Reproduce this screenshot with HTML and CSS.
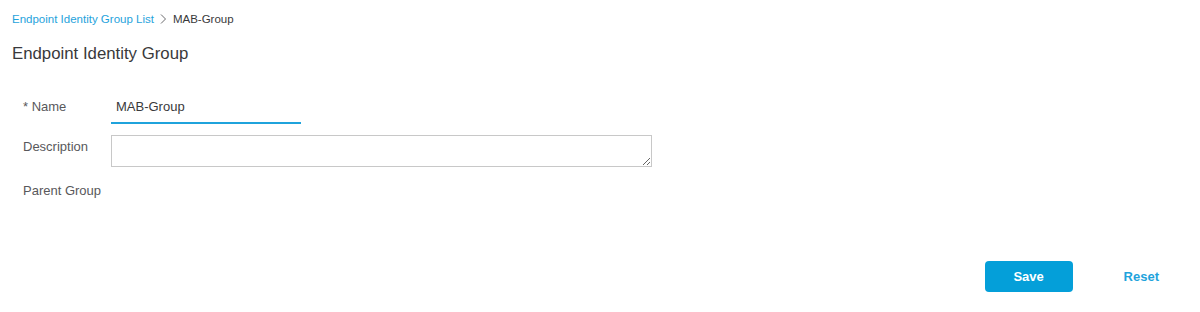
FILE: index.html
```html
<!DOCTYPE html>
<html lang="en">
<head>
    <meta charset="UTF-8">
    <title>Endpoint Identity Group</title>
    <link rel="stylesheet" href="styles.css">
</head>
<body>
    <div class="page">
        <div class="breadcrumb">
            <a href="#" class="crumb-link">Endpoint Identity Group List</a>
            <svg class="crumb-sep" viewBox="0 0 8 12"><path d="M2 1.5 L6.5 6 L2 10.5"/></svg>
            <span class="crumb-current">MAB-Group</span>
        </div>

        <h2 class="title">Endpoint Identity Group</h2>

        <form class="form">
            <div class="form-row">
                <label class="form-label label-name">* Name</label>
                <input type="text" class="text-input" value="MAB-Group">
            </div>
            <div class="form-row row-desc">
                <label class="form-label label-desc">Description</label>
                <textarea class="text-area"></textarea>
            </div>
            <div class="form-row row-parent">
                <label class="form-label">Parent Group</label>
            </div>
        </form>

        <div class="actions">
            <button class="btn-save">Save</button>
            <a href="#" class="btn-reset">Reset</a>
        </div>
    </div>
</body>
</html>
```

FILE: styles.css
```css
* {
    margin: 0;
    padding: 0;
    box-sizing: border-box;
}

body {
    font-family: "Liberation Sans", Arial, sans-serif;
    background: #fff;
    color: #39393b;
}

.page {
    padding: 0 12px;
}

.breadcrumb {
    display: flex;
    align-items: center;
    margin-top: 12px;
    font-size: 11.5px;
    line-height: 14px;
}

.crumb-link {
    color: #1fa3dc;
    text-decoration: none;
}

.crumb-sep {
    width: 8px;
    height: 12px;
    margin: 0 6px 0 5px;
    fill: none;
    stroke: #6b6b6e;
    stroke-width: 1;
}

.crumb-current {
    color: #39393b;
}

.title {
    margin-top: 18px;
    font-size: 16.8px;
    line-height: 20px;
    font-weight: normal;
    color: #39393b;
}

.form {
    padding-left: 11px;
    margin-top: 28px;
}

.form-row {
    display: flex;
    align-items: flex-start;
}

.form-label {
    width: 88px;
    font-size: 13px;
    line-height: 16px;
    color: #58585b;
}

.label-name {
    padding-top: 7px;
}

.text-input {
    width: 190px;
    padding: 7px 5px 7px;
    font-family: inherit;
    font-size: 13px;
    line-height: 16px;
    color: #39393b;
    border: none;
    border-bottom: 2px solid #1fa3dc;
    outline: none;
    background: transparent;
}

.row-desc {
    margin-top: 11px;
}

.label-desc {
    padding-top: 4px;
}

.text-area {
    width: 541px;
    height: 32px;
    border: 1px solid #c8c8c8;
    font-family: inherit;
    font-size: 13px;
    outline: none;
    resize: both;
}

.row-parent {
    margin-top: 16px;
}

.actions {
    display: flex;
    justify-content: flex-end;
    align-items: center;
    margin-top: 62px;
    padding-right: 29px;
}

.btn-save {
    width: 88px;
    height: 31px;
    border: none;
    border-radius: 4px;
    background: #049fd9;
    color: #fff;
    font-family: inherit;
    font-size: 13px;
    font-weight: bold;
    cursor: pointer;
}

.btn-reset {
    margin-left: 51px;
    color: #1fa3dc;
    font-size: 13px;
    font-weight: bold;
    text-decoration: none;
}
```
